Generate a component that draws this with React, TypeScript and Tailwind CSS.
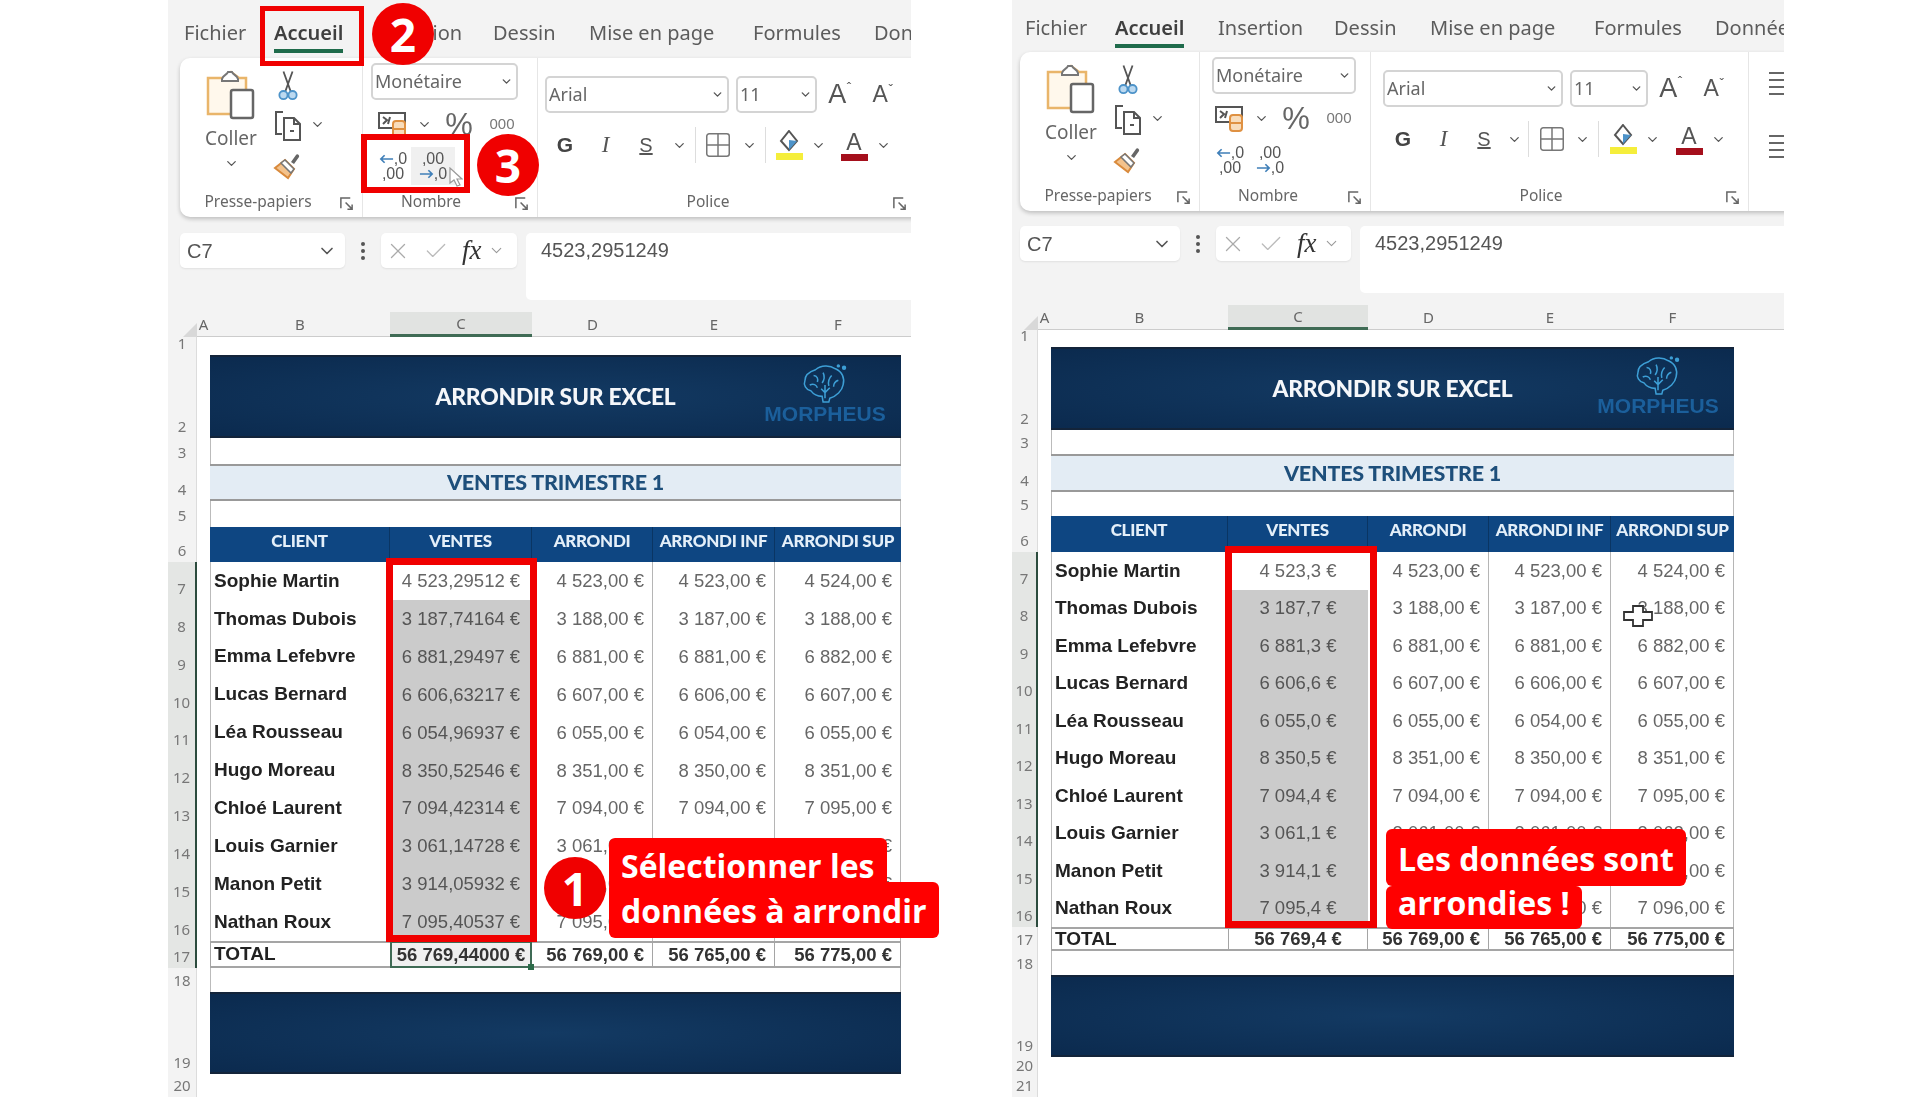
import { Check, ChevronDown, Grid2x2, X } from "lucide-react";

type Row = { name: string; sale: string; round: string; down: string; up: string };

const people: Omit<Row, "sale">[] = [
  { name: "Sophie Martin", round: "4 523,00 €", down: "4 523,00 €", up: "4 524,00 €" },
  { name: "Thomas Dubois", round: "3 188,00 €", down: "3 187,00 €", up: "3 188,00 €" },
  { name: "Emma Lefebvre", round: "6 881,00 €", down: "6 881,00 €", up: "6 882,00 €" },
  { name: "Lucas Bernard", round: "6 607,00 €", down: "6 606,00 €", up: "6 607,00 €" },
  { name: "Léa Rousseau", round: "6 055,00 €", down: "6 054,00 €", up: "6 055,00 €" },
  { name: "Hugo Moreau", round: "8 351,00 €", down: "8 350,00 €", up: "8 351,00 €" },
  { name: "Chloé Laurent", round: "7 094,00 €", down: "7 094,00 €", up: "7 095,00 €" },
  { name: "Louis Garnier", round: "3 061,00 €", down: "3 061,00 €", up: "3 062,00 €" },
  { name: "Manon Petit", round: "3 914,00 €", down: "3 914,00 €", up: "3 915,00 €" },
  { name: "Nathan Roux", round: "7 095,00 €", down: "7 095,00 €", up: "7 096,00 €" },
];

const before = ["4 523,29512 €", "3 187,74164 €", "6 881,29497 €", "6 606,63217 €", "6 054,96937 €", "8 350,52546 €", "7 094,42314 €", "3 061,14728 €", "3 914,05932 €", "7 095,40537 €"];
const after = ["4 523,3 €", "3 187,7 €", "6 881,3 €", "6 606,6 €", "6 055,0 €", "8 350,5 €", "7 094,4 €", "3 061,1 €", "3 914,1 €", "7 095,4 €"];

const tabs = [
  { label: "Fichier", w: "w-[90px]" },
  { label: "Accueil", w: "w-[103px]" },
  { label: "Insertion", w: "w-[116px]" },
  { label: "Dessin", w: "w-[96px]" },
  { label: "Mise en page", w: "w-[164px]" },
  { label: "Formules", w: "w-[121px]" },
  { label: "Données", w: "w-[100px]" },
];
const ui = "font-['Noto_Sans',sans-serif]";
const arial = "font-['Liberation_Sans',Arial,sans-serif]";
const lato = "font-['Lato',sans-serif]";

function Chevron({ className = "" }: { className?: string }) {
  return <ChevronDown className={`h-[15px] w-[15px] text-[#555] ${className}`} strokeWidth={2} />;
}

function PasteIcon() {
  return (
    <svg viewBox="0 0 50 50" className="h-[52px] w-[50px]" fill="none">
      <path d="M9 8h8l8-6 8 6h7v36H2V8z" fill="#fff8ec" stroke="#e9b56a" strokeWidth="2.5" />
      <path d="M16 9c1-4 5-4 6-7h4c1 3 5 3 6 7v2H16z" fill="#fff" stroke="#777" strokeWidth="2" />
      <rect x="25" y="20" width="22" height="28" rx="2" fill="#fff" stroke="#666" strokeWidth="2.5" />
    </svg>
  );
}

function ScissorsIcon() {
  return (
    <svg viewBox="0 0 22 34" className="h-[34px] w-[20px]" fill="none">
      <path d="M6 1l8 22M16 1L8 23" stroke="#555" strokeWidth="2" />
      <circle cx="6" cy="27" r="4.5" fill="#bcd9f0" stroke="#4d93c9" strokeWidth="2" />
      <circle cx="16" cy="27" r="4.5" fill="#bcd9f0" stroke="#4d93c9" strokeWidth="2" />
    </svg>
  );
}

function CopyIcon() {
  return (
    <svg viewBox="0 0 28 30" className="h-[30px] w-[28px]" fill="none" stroke="#555" strokeWidth="2">
      <path d="M9 1H2v22h6" />
      <path d="M10 7h10l6 6v16H10z" fill="#fff" />
      <path d="M20 7v6h6" />
      <path d="M16 20h4" />
    </svg>
  );
}

function BrushIcon() {
  return (
    <svg viewBox="0 0 30 30" className="h-[30px] w-[30px]" fill="none">
      <path d="M18 11l5-7c1-2 4 0 3 2l-5 7z" fill="#666" />
      <path d="M12 9l9 9-6 9L2 17z" fill="#f3c28c" stroke="#d98a3c" strokeWidth="2" />
      <path d="M12 9l9 9-3 4-10-10z" fill="#fff" stroke="#777" strokeWidth="1.5" />
    </svg>
  );
}

function MoneyIcon() {
  return (
    <svg viewBox="0 0 30 30" className="h-[30px] w-[30px]" fill="none">
      <rect x="1" y="4" width="26" height="15" fill="#fff" stroke="#555" strokeWidth="2" />
      <path d="M5 8l4 3-4 4M12 8l-2 7" stroke="#555" strokeWidth="2" />
      <rect x="15" y="12" width="12" height="16" rx="3" fill="#f8ddbc" stroke="#df9142" strokeWidth="2" />
      <path d="M15 20h12" stroke="#df9142" strokeWidth="2" />
    </svg>
  );
}

function Launcher() {
  return (
    <svg viewBox="0 0 16 16" className="h-[15px] w-[15px]" fill="none" stroke="#666" strokeWidth="1.6">
      <path d="M2 13V2h10" />
      <path d="M7 7l7 7M14 9v5H9" />
    </svg>
  );
}

function FillIcon() {
  return (
    <div className="flex flex-col items-center">
      <svg viewBox="0 0 22 22" className="h-[22px] w-[22px]" fill="none">
        <path d="M11 1l8 10-8 9-8-9z" fill="#fff" stroke="#555" strokeWidth="2" />
        <path d="M11 10l8 1-8 9z" fill="#4d93c9" />
      </svg>
      <div className="mt-[1px] h-[7px] w-[27px] bg-[#f5ee3b]" />
    </div>
  );
}

function DecimalIcon({ more }: { more?: boolean }) {
  const arrow = (
    <svg viewBox="0 0 16 10" className="h-[10px] w-[15px]" fill="none" stroke="#3f7fb8" strokeWidth="1.8">
      {more ? <path d="M1 5h13M10 1l4 4-4 4" /> : <path d="M15 5H2M6 1L2 5l4 4" />}
    </svg>
  );
  const small = `${arial} text-[16px] leading-[15px] text-[#555]`;
  return more ? (
    <div className="flex flex-col items-center">
      <span className={small}>,00</span>
      <div className="flex items-center">
        {arrow}
        <span className={small}>,0</span>
      </div>
    </div>
  ) : (
    <div className="flex flex-col items-center">
      <div className="flex items-center">
        {arrow}
        <span className={small}>,0</span>
      </div>
      <span className={small}>,00</span>
    </div>
  );
}

function Select({ label, className = "" }: { label: string; className?: string }) {
  return (
    <div className={`flex h-[37px] items-center justify-between rounded-[5px] border-2 border-[#d4d4d4] bg-white pl-[2px] pr-[3px] ${className}`}>
      <span className="text-[18px] text-[#666]">{label}</span>
      <ChevronDown className="h-[13px] w-[13px] text-[#555]" strokeWidth={2.5} />
    </div>
  );
}

function GroupLabel({ label, center }: { label: string; center: string }) {
  return (
    <div className="relative flex h-[28px] items-center justify-end pr-[8px]">
      <span className={`absolute top-[1px] -translate-x-1/2 whitespace-nowrap text-[15.5px] leading-[22px] text-[#666] ${center}`}>{label}</span>
      <Launcher />
    </div>
  );
}

function Ribbon({ compact, hoverDec }: { compact?: boolean; hoverDec?: boolean }) {
  return (
    <div className={`flex h-[159px] w-[900px] rounded-l-[10px] bg-white shadow-[0_2px_4px_rgba(0,0,0,0.22)] ${compact ? "ml-[8px]" : "ml-[12px]"}`}>
      {/* presse-papiers */}
      <div className={`flex shrink-0 flex-col ${compact ? "w-[179px]" : "w-[182px]"}`}>
        <div className="flex h-[131px] pl-[12px]">
          <div className="flex w-[78px] flex-col items-center pt-[11px]">
            <PasteIcon />
            <span className="mt-[4px] text-[19px] leading-[26px] text-[#666]">Coller</span>
            <Chevron className="mt-[5px]" />
          </div>
          <div className="flex w-[36px] flex-col items-center pt-[8px]">
            <div className="flex h-[40px] items-center"><ScissorsIcon /></div>
            <div className="flex h-[40px] items-center"><CopyIcon /></div>
            <div className="flex h-[40px] items-center"><BrushIcon /></div>
          </div>
          <div className="pl-[4px] pt-[59px]"><Chevron /></div>
        </div>
        <GroupLabel label="Presse-papiers" center="left-[78px]" />
      </div>
      {/* nombre */}
      <div className={`flex shrink-0 flex-col border-l border-[#e6e6e6] ${compact ? "w-[171px]" : "w-[175px]"}`}>
        <div className="flex h-[131px] flex-col pl-[8px] pt-[5px]">
          <Select label="Monétaire" className={compact ? "ml-[4px] w-[144px]" : "w-[147px]"} />
          <div className="ml-[4px] mt-[2px] flex h-[44px] items-center">
            <div className="flex w-[36px] justify-center"><MoneyIcon /></div>
            <div className="flex w-[26px] justify-center"><Chevron /></div>
            <div className={`flex w-[44px] justify-center ${arial} text-[31px] leading-none text-[#666]`}>%</div>
            <div className={`flex w-[42px] justify-center ${arial} text-[15px] text-[#777]`}>000</div>
          </div>
          <div className="ml-[4px] flex h-[40px] items-center">
            <div className="flex w-[36px] justify-center"><DecimalIcon /></div>
            <div className={`flex h-[38px] w-[44px] items-center justify-center ${hoverDec ? "bg-[#f0f0f0]" : ""}`}><DecimalIcon more /></div>
          </div>
        </div>
        <GroupLabel label="Nombre" center="left-[68px]" />
      </div>
      {/* police */}
      <div className="flex w-[379px] shrink-0 flex-col border-l border-r border-[#e6e6e6]">
        <div className={`flex h-[131px] flex-col pt-[18px] ${compact ? "pl-[12px]" : "pl-[7px]"}`}>
          <div className="flex items-center">
            <Select label="Arial" className={compact ? "w-[180px]" : "w-[184px]"} />
            <Select label="11" className={`ml-[7px] ${compact ? "w-[78px]" : "w-[81px]"}`} />
            <div className="flex w-[46px] justify-center text-[#555]">
              <span className={`${arial} text-[27px] leading-none`}>A</span><span className="text-[13px] leading-none">ˆ</span>
            </div>
            <div className="flex w-[40px] justify-center text-[#555]">
              <span className={`${arial} text-[23px] leading-none`}>A</span><span className="text-[13px] leading-none">ˇ</span>
            </div>
          </div>
          <div className="mt-[10px] flex h-[44px] items-center text-[#555]">
            <div className={`flex w-[40px] justify-center ${arial} text-[21px] font-bold text-[#444]`}>G</div>
            <div className="flex w-[41px] justify-center font-['Liberation_Serif',serif] text-[23px] italic">I</div>
            <div className={`flex w-[40px] justify-center ${arial} text-[20px] underline`}>S</div>
            <div className={`flex justify-center ${compact ? "w-[20px]" : "w-[26px]"}`}><Chevron /></div>
            <div className={`h-[36px] w-px bg-[#ddd] ${compact ? "mx-[4px]" : "mx-[3px]"}`} />
            <div className="flex w-[37px] justify-center"><Grid2x2 className="h-[30px] w-[30px] text-[#777]" strokeWidth={1.2} /></div>
            <div className={`flex justify-center ${compact ? "w-[24px]" : "w-[26px]"}`}><Chevron /></div>
            <div className={`h-[36px] w-px bg-[#ddd] ${compact ? "mx-[4px]" : "mx-[3px]"}`} />
            <div className="flex w-[40px] justify-center"><FillIcon /></div>
            <div className={`flex justify-center ${compact ? "w-[18px]" : "w-[19px]"}`}><Chevron /></div>
            <div className={`flex w-[44px] flex-col items-center ${compact ? "ml-[6px]" : "ml-[4px]"}`}>
              <span className={`${arial} text-[23px] leading-[24px] text-[#555]`}>A</span>
              <div className="h-[7px] w-[27px] bg-[#a50f1c]" />
            </div>
            <Chevron />
          </div>
        </div>
        <GroupLabel label="Police" center="left-[170px]" />
      </div>
      {/* alignement, coupé par le bord */}
      <div className="flex flex-col gap-[40px] pl-[20px] pt-[20px]">
        {[0, 1].map((i) => (
          <div key={i} className="flex w-[20px] flex-col gap-[5px]">
            <div className="h-[2px] bg-[#666]" />
            <div className="h-[2px] bg-[#666]" />
            <div className="h-[2px] bg-[#666]" />
            <div className="h-[2px] bg-[#666]" />
          </div>
        ))}
      </div>
    </div>
  );
}

function FormulaBar({ compact }: { compact?: boolean }) {
  return (
    <div className={`flex h-[79px] items-start ${compact ? "pl-[8px]" : "pl-[12px]"}`}>
      <div className={`flex h-[35px] items-center justify-between rounded-[5px] bg-white pl-[7px] pr-[8px] shadow-[0_1px_2px_rgba(0,0,0,0.08)] ${compact ? "w-[160px]" : "w-[165px]"}`}>
        <span className={`${arial} text-[20px] text-[#555]`}>C7</span>
        <ChevronDown className="h-[20px] w-[20px] text-[#555]" strokeWidth={2} />
      </div>
      <div className="flex h-[35px] w-[36px] flex-col items-center justify-center gap-[3px]">
        <div className="h-[4px] w-[4px] rounded-full bg-[#555]" />
        <div className="h-[4px] w-[4px] rounded-full bg-[#555]" />
        <div className="h-[4px] w-[4px] rounded-full bg-[#555]" />
      </div>
      <div className={`flex h-[35px] items-center rounded-[5px] bg-white pl-[4px] shadow-[0_1px_2px_rgba(0,0,0,0.08)] ${compact ? "w-[135px]" : "w-[136px]"}`}>
        <X className="h-[26px] w-[26px] text-[#aaa]" strokeWidth={1.2} />
        <Check className="ml-[12px] h-[26px] w-[26px] text-[#bbb]" strokeWidth={1.2} />
        <span className="ml-[13px] font-['Liberation_Serif',serif] text-[27px] italic leading-none text-[#333]">fx</span>
        <ChevronDown className="ml-[6px] h-[17px] w-[17px] text-[#999]" strokeWidth={1.5} />
      </div>
      <div className="ml-[9px] h-[67px] flex-1 rounded-l-[5px] bg-white pl-[15px] pt-[3px]">
        <span className={`${arial} text-[20px] leading-[28px] text-[#555]`}>4523,2951249</span>
      </div>
    </div>
  );
}

function Logo() {
  return (
    <div className="absolute right-[14px] top-[7px] flex w-[124px] flex-col items-center">
      <svg viewBox="0 0 52 42" className="h-[40px] w-[50px]" fill="none" stroke="#3d9fd6" strokeWidth="1.6">
        <path d="M16 6c6-5 15-5 21-1 7 3 10 10 8 17-1 6-7 12-14 14l-1 4h-6l-1-6c-5 0-9-2-12-6-5-1-8-6-6-11 0-5 5-9 11-11z" />
        <path d="M14 12c4 0 5 4 4 7M10 22c4-2 7 0 8 3M24 9c2 4 1 8-1 11M33 12c-3 3-4 7-3 11M40 17c-3 1-5 4-5 7M26 22v14M22 26l4 4 5-5" />
        <circle cx="46" cy="4" r="1.5" fill="#3d9fd6" />
        <circle cx="40" cy="2" r="1" fill="#3d9fd6" />
      </svg>
      <span className={`${arial} mt-[1px] text-[21px] font-bold leading-[17px] text-[#1b5f9b]`}>MORPHEUS</span>
    </div>
  );
}

function Sheet({ cols, rows, sales, total, activeTotal, rowCount }: { cols: string; rows: string; sales: string[]; total: string; activeTotal?: boolean; rowCount: number }) {
  const hd = (n: number, sel?: boolean) => (
    <div className={`flex items-end justify-center pb-[3px] text-[15px] leading-[18px] text-[#777] ${sel ? "border-r-2 border-[#2c4c3e] bg-[#e4e6e4]" : "border-r border-[#dcdcdc] bg-[#f3f3f3]"}`}>
      {n}
    </div>
  );
  const band = "col-span-5 border-x border-[#bbb]";
  const spacer = <div className="bg-white" />;
  const end = <div className="bg-white" />;
  const headers = ["CLIENT", "VENTES", "ARRONDI", "ARRONDI INF", "ARRONDI SUP"];
  return (
    <div className={`grid h-full ${cols} ${rows} bg-white`}>
      {/* en-tetes de colonnes */}
      <div className="flex items-end justify-end bg-[#f3f3f3]">
        <div className="h-0 w-0 border-b-[14px] border-l-[14px] border-b-[#d8d8d8] border-l-transparent" />
      </div>
      {["A", "B", "C", "D", "E", "F"].map((c) => (
        <div key={c} className={`flex items-center justify-center text-[15px] text-[#666] ${c === "C" ? "border-b-[3px] border-[#3f6b55] bg-[#e1e3e1]" : "border-b border-[#ccc] bg-[#f3f3f3]"}`}>
          {c}
        </div>
      ))}
      <div className="border-b border-[#ccc] bg-[#f3f3f3]" />

      {hd(1)}{spacer}<div className="col-span-5 bg-white" />{end}

      {hd(2)}{spacer}
      <div className={`relative col-span-5 flex items-center justify-center border-y-2 border-[#13243a] bg-[radial-gradient(ellipse_at_center,#133a63,#0b2a4e)] ${lato}`}>
        <span className="text-[22.8px] font-black tracking-[-0.2px] text-[#f5f7fa]">ARRONDIR SUR EXCEL</span>
        <Logo />
      </div>
      {end}

      {hd(3)}{spacer}<div className={`${band} bg-white`} />{end}

      {hd(4)}{spacer}
      <div className={`col-span-5 flex items-center justify-center border-y-2 border-[#999] bg-[#e3ecf4] ${lato}`}>
        <span className="text-[21.5px] font-black tracking-[-0.2px] text-[#1e4f7b]">VENTES TRIMESTRE 1</span>
      </div>
      {end}

      {hd(5)}{spacer}<div className={`${band} bg-white`} />{end}

      {hd(6)}{spacer}
      {headers.map((h, i) => (
        <div key={h} className={`flex items-start justify-center whitespace-nowrap bg-[#0e4682] pt-[1px] ${lato} text-[17px] font-black tracking-[-0.3px] text-[#e4eff9] ${i < 4 ? "border-r border-[#0a3563]" : ""}`}>
          {h}
        </div>
      ))}
      {end}

      {people.map((p, i) => (
        <div key={p.name} className="contents">
          {hd(i + 7, true)}{spacer}
          <div className={`flex items-center border-l border-[#bbb] pl-[3px] ${arial} text-[19px] font-bold text-[#222]`}>{p.name}</div>
          <div className={`flex items-center justify-center ${arial} text-[18.5px] ${i > 0 ? "bg-[#cbcbcb] text-[#555]" : "text-[#666]"}`}>{sales[i]}</div>
          {[p.round, p.down, p.up].map((v, j) => (
            <div key={j} className={`flex items-center justify-end border-r border-[#b5b5b5] pr-[8px] ${arial} text-[18.5px] text-[#666]`}>{v}</div>
          ))}
          {end}
        </div>
      ))}

      {hd(17, activeTotal)}{spacer}
      <div className={`flex items-center border-y-2 border-l border-[#a5a5a5] pl-[3px] ${arial} text-[19px] font-bold text-[#222]`}>TOTAL</div>
      <div className={`relative flex items-center justify-center border-y-2 ${arial} text-[18.5px] font-bold text-[#333] ${activeTotal ? "border-x-2 border-[#3f6b55] bg-[#f0f0f0]" : "border-x border-[#a5a5a5]"}`}>
        {total}
        {activeTotal && <div className="absolute -bottom-[4px] -right-[4px] h-[6px] w-[6px] bg-[#2c6b4a]" />}
      </div>
      {["56 769,00 €", "56 765,00 €", "56 775,00 €"].map((v) => (
        <div key={v} className={`flex items-center justify-end border-y-2 border-r border-[#a5a5a5] pr-[8px] ${arial} text-[18.5px] font-bold text-[#333]`}>{v}</div>
      ))}
      {end}

      {hd(18)}{spacer}<div className={`${band} bg-white`} />{end}

      {hd(19)}{spacer}
      <div className="col-span-5 border-y-2 border-[#13243a] bg-[radial-gradient(ellipse_at_center,#133a63,#0b2a4e)]" />
      {end}

      {hd(20)}{spacer}<div className="col-span-5" />{end}
      {rowCount > 20 && <>{hd(21)}{spacer}<div className="col-span-5" />{end}</>}
    </div>
  );
}

function Workbook({ compact, hoverDec, sales, total, activeTotal, cols, rows, rowCount, tabRow, bottom }: {
  compact?: boolean; hoverDec?: boolean; sales: string[]; total: string; activeTotal?: boolean; cols: string; rows: string; rowCount: number; tabRow: string; bottom: string;
}) {
  return (
    <div className={`flex h-full flex-col overflow-hidden bg-[#f3f3f3] blur-[0.5px] ${ui}`}>
      <div className={`flex shrink-0 ${tabRow} text-[20px] text-[#5c5c5c]`}>
        {tabs.map((t) => (
          <div key={t.label} className={`shrink-0 ${t.w}`}>
            <div className={`h-[36px] w-fit whitespace-nowrap leading-[32px] ${t.label === "Accueil" ? "border-b-[4px] border-[#1f6b4b] font-semibold text-[#3f3f3f]" : ""}`}>{t.label}</div>
          </div>
        ))}
      </div>
      <div className="shrink-0"><Ribbon compact={compact} hoverDec={hoverDec} /></div>
      <div className={`shrink-0 ${bottom}`}><FormulaBar compact={compact} /></div>
      <div className="min-h-0 flex-1">
        <Sheet cols={cols} rows={rows} sales={sales} total={total} activeTotal={activeTotal} rowCount={rowCount} />
      </div>
    </div>
  );
}

function Callout({ first, second, firstClass, secondClass }: { first: string; second: string; firstClass: string; secondClass: string }) {
  const base = "whitespace-nowrap rounded-[6px] bg-[#ff0000] px-[12px] font-['Open_Sans',sans-serif] text-[32px] font-bold text-white";
  return (
    <div className="flex flex-col items-start">
      <div className={`${base} ${firstClass}`}>{first}</div>
      <div className={`${base} ${secondClass}`}>{second}</div>
    </div>
  );
}

function Badge({ n }: { n: number }) {
  return (
    <div className="flex h-[62px] w-[62px] items-center justify-center rounded-full bg-[#f00000] font-['Open_Sans',sans-serif] text-[46px] font-bold text-white">
      {n}
    </div>
  );
}

export default function App() {
  return (
    <div className="flex h-[1097px] w-[1920px] overflow-hidden bg-white pl-[168px]">
      <div className="relative h-full w-[743px] shrink-0">
        <Workbook
          hoverDec
          activeTotal
          sales={before}
          total="56 769,44000 €"
          cols="grid-cols-[29px_13px_180px_142px_121px_122px_126px_1fr]"
          rows="grid-rows-[25px_18px_83px_26px_37px_26px_35px_repeat(10,37.9px)_27px_24px_82px_23px]"
          rowCount={20}
          tabRow="h-[58px] pt-[17px] pl-[16px]"
          bottom="pt-[16px]"
        />
        {/* annotations */}
        <div className="absolute left-[92px] top-[6px] h-[60px] w-[104px] border-[5px] border-[#f00000]" />
        <div className="absolute left-[204px] top-[3px]"><Badge n={2} /></div>
        <div className="absolute left-[193px] top-[134px] h-[59px] w-[109px] border-[6px] border-[#f00000]" />
        <div className="absolute left-[309px] top-[134px]"><Badge n={3} /></div>
        <svg viewBox="0 0 14 20" className="absolute left-[281px] top-[167px] h-[20px] w-[14px]" fill="#fff" stroke="#999" strokeWidth="1.2">
          <path d="M1 1v15l4-3 3 6 3-1-3-6h5z" />
        </svg>
        <div className="absolute left-[218px] top-[558px] h-[384px] w-[151px] border-[7px] border-[#f00000]" />
        <div className="absolute left-[376px] top-[857px]"><Badge n={1} /></div>
        <div className="absolute left-[441px] top-[838px]">
          <Callout
            first="Sélectionner les"
            second="données à arrondir"
            firstClass="h-[52px] leading-[56px]"
            secondClass="-mt-[8px] h-[56px] leading-[58px]"
          />
        </div>
      </div>

      <div className="relative ml-[101px] h-full w-[772px] shrink-0">
        <Workbook
          compact
          sales={after}
          total="56 769,4 €"
          cols="grid-cols-[26px_13px_177px_140px_121px_122px_123px_1fr]"
          rows="grid-rows-[25px_17px_83px_24px_38px_24px_36px_repeat(10,37.5px)_24px_24px_82px_20px_20px]"
          rowCount={21}
          tabRow="h-[52px] pt-[12px] pl-[13px]"
          bottom="pt-[15px]"
        />
        <svg viewBox="0 0 32 24" className="absolute left-[610px] top-[604px] h-[24px] w-[32px]" fill="#fff" stroke="#333" strokeWidth="1.8">
          <path d="M11 2h10v6h9v8h-9v6H11v-6H2V8h9z" />
        </svg>
        <div className="absolute left-[213px] top-[546px] h-[382px] w-[152px] border-[7px] border-[#f00000]" />
        <div className="absolute left-[374px] top-[829px]">
          <Callout
            first="Les données sont"
            second="arrondies !"
            firstClass="h-[57px] leading-[60px]"
            secondClass="h-[43px] leading-[34px]"
          />
        </div>
      </div>
    </div>
  );
}
